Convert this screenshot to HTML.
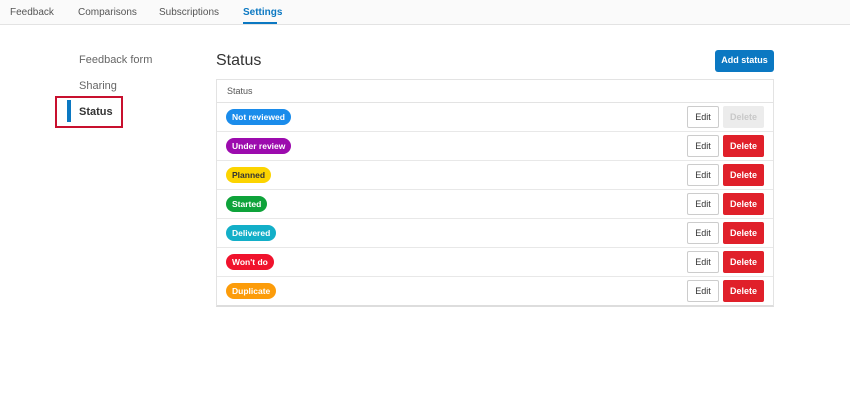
<!DOCTYPE html>
<html><head><style>
*{box-sizing:border-box;margin:0;padding:0}
body{width:850px;height:410px;background:#fff;font-family:"Liberation Sans",sans-serif;position:relative;overflow:hidden;color:#333}
.nav{position:absolute;left:0;top:0;width:850px;height:25px;background:#fafafa;border-bottom:1px solid #e3e3e3}
.nav span{position:absolute;top:7px;font-size:10px;color:#555}
.nav .act{color:#0b78c2;font-weight:bold}
.ul{position:absolute;left:243px;top:22px;width:34px;height:2px;background:#0b78c2}
.side{position:absolute;left:79px;font-size:11px;color:#666}
.box{position:absolute;left:55px;top:96px;width:68px;height:32px;border:2px solid #c8102e}
.bar{position:absolute;left:67px;top:100px;width:4px;height:22px;background:#0b78c2}
h1{position:absolute;left:216px;top:52px;font-size:16px;font-weight:normal;color:#333}
.add{position:absolute;left:715px;top:50px;width:59px;height:22px;background:#0b78c2;color:#fff;border-radius:3px;font-size:9px;font-weight:bold;text-align:center;line-height:21px}
.tbl{position:absolute;left:216px;top:79px;width:558px;height:228px;border:1px solid #e3e3e3;border-bottom:2px solid #ddd}
.hd{height:23px;border-bottom:1px solid #e3e3e3;font-size:9px;line-height:22px;padding-left:10px;color:#555}
.row{height:29px;border-bottom:1px solid #e8e8e8;position:relative}
.row:last-child{border-bottom:none}
.b{position:absolute;left:9px;top:6px;height:16px;border-radius:8px;color:#fff;font-size:8.5px;font-weight:bold;line-height:16px;padding:0 6px}
.e{position:absolute;left:470px;top:3px;width:32px;height:22px;border:1px solid #ccc;border-radius:2px;font-size:9px;text-align:center;line-height:20px;color:#333;background:#fff}
.d{position:absolute;left:506px;top:3px;width:41px;height:22px;border-radius:2px;font-size:9px;font-weight:bold;text-align:center;line-height:22px;color:#fff;background:#e0202a}
.d.dis{background:#ececec;color:#c8c8c8}
</style></head><body>
<div class="nav"><span style="left:10px">Feedback</span><span style="left:78px">Comparisons</span><span style="left:159px">Subscriptions</span><span class="act" style="left:243px">Settings</span></div>
<div class="ul"></div>
<div class="side" style="top:54px">Feedback form</div>
<div class="side" style="top:80px">Sharing</div>
<div class="side" style="top:106px;color:#333;font-weight:bold">Status</div>
<div class="bar"></div><div class="box"></div>
<h1>Status</h1>
<div class="add">Add status</div>
<div class="tbl">
<div class="hd">Status</div>
<div class="row"><span class="b" style="background:#1a8ceb">Not reviewed</span><span class="e">Edit</span><span class="d dis">Delete</span></div>
<div class="row"><span class="b" style="background:#9c0bae">Under review</span><span class="e">Edit</span><span class="d">Delete</span></div>
<div class="row"><span class="b" style="background:#fcd400;color:#333">Planned</span><span class="e">Edit</span><span class="d">Delete</span></div>
<div class="row"><span class="b" style="background:#0ea33a">Started</span><span class="e">Edit</span><span class="d">Delete</span></div>
<div class="row"><span class="b" style="background:#13afc8">Delivered</span><span class="e">Edit</span><span class="d">Delete</span></div>
<div class="row"><span class="b" style="background:#f0132d">Won't do</span><span class="e">Edit</span><span class="d">Delete</span></div>
<div class="row"><span class="b" style="background:#fc9c0a">Duplicate</span><span class="e">Edit</span><span class="d">Delete</span></div>
</div>
</body></html>
